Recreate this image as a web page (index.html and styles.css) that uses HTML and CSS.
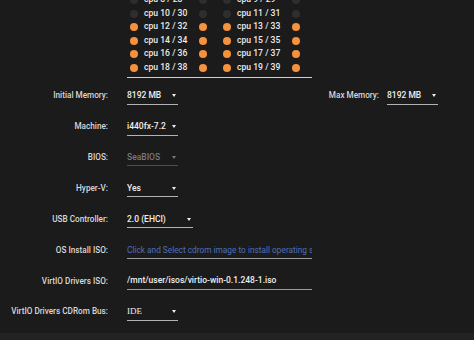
FILE: index.html
```html
<!DOCTYPE html>
<html>
<head>
<meta charset="utf-8">
<link rel="stylesheet" href="styles.css">
</head>
<body>
<div class="page">
  <div class="cpu-block">
    <div class="spacer"></div>
    <div class="cpus">
      <div class="cpu"><span class="dot"></span><span class="cpu-label">cpu 8 / 28</span><span class="dot"></span></div>
      <div class="cpu"><span class="dot"></span><span class="cpu-label">cpu 9 / 29</span><span class="dot"></span></div>
      <div class="cpu"><span class="dot"></span><span class="cpu-label">cpu 10 / 30</span><span class="dot"></span></div>
      <div class="cpu"><span class="dot"></span><span class="cpu-label">cpu 11 / 31</span><span class="dot"></span></div>
      <div class="cpu"><span class="dot on"></span><span class="cpu-label">cpu 12 / 32</span><span class="dot on"></span></div>
      <div class="cpu"><span class="dot on"></span><span class="cpu-label">cpu 13 / 33</span><span class="dot on"></span></div>
      <div class="cpu"><span class="dot on"></span><span class="cpu-label">cpu 14 / 34</span><span class="dot on"></span></div>
      <div class="cpu"><span class="dot on"></span><span class="cpu-label">cpu 15 / 35</span><span class="dot on"></span></div>
      <div class="cpu"><span class="dot on"></span><span class="cpu-label">cpu 16 / 36</span><span class="dot on"></span></div>
      <div class="cpu"><span class="dot on"></span><span class="cpu-label">cpu 17 / 37</span><span class="dot on"></span></div>
      <div class="cpu"><span class="dot on"></span><span class="cpu-label">cpu 18 / 38</span><span class="dot on"></span></div>
      <div class="cpu"><span class="dot on"></span><span class="cpu-label">cpu 19 / 39</span><span class="dot on"></span></div>
    </div>
  </div>

  <div class="form">
    <div class="row row-pair">
      <div class="label">Initial Memory:</div>
      <div class="field select w-sm">8192 MB</div>
      <div class="label2">Max Memory:</div>
      <div class="field select w-sm">8192 MB</div>
    </div>
    <div class="row">
      <div class="label">Machine:</div>
      <div class="field select w-sm">i440fx-7.2</div>
    </div>
    <div class="row">
      <div class="label">BIOS:</div>
      <div class="field select w-sm disabled">SeaBIOS</div>
    </div>
    <div class="row">
      <div class="label">Hyper-V:</div>
      <div class="field select w-sm">Yes</div>
    </div>
    <div class="row">
      <div class="label">USB Controller:</div>
      <div class="field select w-md">2.0 (EHCI)</div>
    </div>
    <div class="row">
      <div class="label">OS Install ISO:</div>
      <div class="field w-lg input placeholder">Click and Select cdrom image to install operating system</div>
    </div>
    <div class="row">
      <div class="label">VirtIO Drivers ISO:</div>
      <div class="field w-lg input">/mnt/user/isos/virtio-win-0.1.248-1.iso</div>
    </div>
    <div class="row">
      <div class="label">VirtIO Drivers CDRom Bus:</div>
      <div class="field select w-sm serif">IDE</div>
    </div>
  </div>
  <div class="footer"></div>
</div>
</body>
</html>
```
FILE: styles.css
```css
html, body {
  margin: 0;
  padding: 0;
  background: #1c1b1c;
  overflow: hidden;
}
body {
  font-family: Roboto, "Liberation Sans", Arial, sans-serif;
  font-weight: 500;
  font-size: 8.6px;
  color: #e4e4e4;
}
.page {
  width: 474px;
  height: 340px;
  overflow: hidden;
}
.cpu-block {
  display: flex;
}
.spacer {
  width: 108px;
  margin-right: 19px;
  flex: none;
}
.cpus {
  width: 182px;
  margin-top: -6.75px;
  padding: 0 0 3px 3px;
  border-bottom: 1px solid #cfcfcf;
  display: grid;
  grid-template-columns: 77px 77px;
  column-gap: 16px;
  grid-auto-rows: 13.5px;
}
.cpu {
  display: grid;
  grid-template-columns: 8px 61px 8px;
  align-items: center;
}
.cpu-label {
  padding-left: 6px;
  line-height: 13.5px;
  color: #ebebeb;
  white-space: nowrap;
}
.dot {
  width: 8px;
  height: 8px;
  border-radius: 50%;
  background: #2e2e2e;
}
.dot.on {
  background: #f6923a;
}
.form {
  margin-top: 2.3px;
}
.row {
  display: flex;
  align-items: center;
  height: 30.86px;
}
.row-pair {
  padding-right: 36px;
}
.label,
.label2 {
  font-size: 8.2px;
  line-height: 11px;
  color: #d8d8d8;
  white-space: nowrap;
}
.label {
  width: 108px;
  flex: none;
  margin-right: 19px;
  text-align: right;
}
.label2 {
  margin-left: auto;
  margin-right: 8px;
}
.field {
  position: relative;
  flex: none;
  box-sizing: border-box;
  line-height: 11px;
  font-size: 8.5px;
  padding-bottom: 2.5px;
  margin-top: 3px;
  border-bottom: 1px solid #b4b4b4;
  color: #efefef;
  white-space: nowrap;
  overflow: hidden;
}
.select::after {
  content: "";
  position: absolute;
  right: 2px;
  top: 4px;
  border-left: 2.5px solid transparent;
  border-right: 2.5px solid transparent;
  border-top: 3.5px solid #eeeeee;
}
.w-sm { width: 51px; }
.w-md { width: 66px; }
.w-lg { width: 185px; }
.disabled {
  color: #7a7a7a;
  border-bottom-color: #4e4e4e;
}
.disabled::after {
  border-top-color: #777;
}
.input {
  border-bottom-color: #9c9c9c;
}
.placeholder {
  font-size: 8.3px;
  font-weight: 400;
  color: #4d6fb6;
}
.serif {
  font-family: "Liberation Serif", "Times New Roman", serif;
  font-weight: normal;
  font-size: 9px;
}
.footer {
  margin-top: 5.5px;
  height: 20px;
  background: #232323;
}
```
